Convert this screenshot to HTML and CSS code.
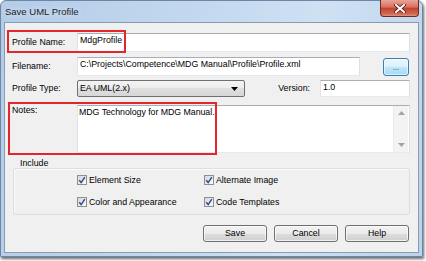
FILE: index.html
```html
<!DOCTYPE html>
<html>
<head>
<meta charset="utf-8">
<title>Save UML Profile</title>
<link rel="stylesheet" href="styles.css">
</head>
<body>
<div class="window">
  <div class="titlebar">
    <span class="title">Save UML Profile</span>
    <div class="close">
      <svg width="12" height="9" viewBox="0 0 12 9"><path d="M2 1 L10 8 M10 1 L2 8" stroke="#5a1f18" stroke-width="3.6" stroke-linecap="square" fill="none"/><path d="M2 1 L10 8 M10 1 L2 8" stroke="#ffffff" stroke-width="2" stroke-linecap="square" fill="none"/></svg>
    </div>
  </div>
  <div class="client">
    <div class="row r1">
      <span class="lbl">Profile Name:</span>
      <div class="input grow">MdgProfile</div>
    </div>
    <div class="row r2">
      <span class="lbl">Filename:</span>
      <div class="input file">C:\Projects\Competence\MDG Manual\Profile\Profile.xml</div>
      <div class="browse">...</div>
    </div>
    <div class="row r3">
      <span class="lbl">Profile Type:</span>
      <div class="combo"><span class="combo-text">EA UML(2.x)</span><svg class="combo-arrow" width="7" height="4" viewBox="0 0 7 4"><path d="M0 0 H7 L3.5 4 Z" fill="#000"/></svg></div>
      <span class="vlbl">Version:</span>
      <div class="input ver">1.0</div>
    </div>
    <div class="row r4">
      <span class="lbl notes-lbl">Notes:</span>
      <div class="textarea">
        <div class="ta-text">MDG Technology for MDG Manual.</div>
        <div class="scroll">
          <div class="sb-btn"><svg width="7" height="4" viewBox="0 0 7 4"><path d="M0 4 H7 L3.5 0 Z" fill="#a3a3a3"/></svg></div>
          <div class="sb-btn"><svg width="7" height="4" viewBox="0 0 7 4"><path d="M0 0 H7 L3.5 4 Z" fill="#a3a3a3"/></svg></div>
        </div>
      </div>
    </div>
    <div class="include-label">Include</div>
    <div class="group">
      <div class="cb"><span class="box"><svg width="8" height="8" viewBox="0 0 8 8"><path d="M1.2 4.2 L3.2 6.6 L6.8 1.2" stroke="#2a4d9c" stroke-width="1.5" fill="none"/></svg></span><span>Element Size</span></div>
      <div class="cb"><span class="box"><svg width="8" height="8" viewBox="0 0 8 8"><path d="M1.2 4.2 L3.2 6.6 L6.8 1.2" stroke="#2a4d9c" stroke-width="1.5" fill="none"/></svg></span><span>Alternate Image</span></div>
      <div class="cb"><span class="box"><svg width="8" height="8" viewBox="0 0 8 8"><path d="M1.2 4.2 L3.2 6.6 L6.8 1.2" stroke="#2a4d9c" stroke-width="1.5" fill="none"/></svg></span><span>Color and Appearance</span></div>
      <div class="cb"><span class="box"><svg width="8" height="8" viewBox="0 0 8 8"><path d="M1.2 4.2 L3.2 6.6 L6.8 1.2" stroke="#2a4d9c" stroke-width="1.5" fill="none"/></svg></span><span>Code Templates</span></div>
    </div>
    <div class="buttons">
      <div class="btn">Save</div>
      <div class="btn">Cancel</div>
      <div class="btn">Help</div>
    </div>
    <div class="mark m1"></div>
    <div class="mark m2"></div>
  </div>
</div>
</body>
</html>
```

FILE: styles.css
```css
html, body {
  margin: 0;
  padding: 0;
}
body {
  width: 426px;
  height: 261px;
  overflow: hidden;
  background: #ffffff;
  font-family: "Liberation Sans", Arial, sans-serif;
  font-size: 8.8px;
  color: #000;
}
.window {
  box-sizing: border-box;
  width: 423px;
  height: 257px;
  border: 1px solid #6d86a6;
  border-radius: 6px 6px 0 0;
  background: linear-gradient(100deg, #b3cce8 0%, #c4d9ef 45%, #cfe1f3 70%, #bcd3ed 100%);
  box-shadow: 1px 2px 3px rgba(0, 0, 0, 0.6);
  display: flex;
  flex-direction: column;
}
.titlebar {
  height: 21px;
  flex: none;
  display: flex;
  align-items: flex-start;
}
.title {
  font-size: 9.5px;
  line-height: 12px;
  padding: 5px 0 0 4px;
  color: #1b1b1b;
  text-shadow: 0 0 6px rgba(255, 255, 255, 0.95);
}
.close {
  margin-left: auto;
  margin-right: 3px;
  margin-top: -1px;
  box-sizing: border-box;
  width: 39px;
  height: 17px;
  border: 1px solid #6a2b22;
  border-top: none;
  border-radius: 0 0 4px 4px;
  background: linear-gradient(#e8a596 0%, #d8705e 45%, #c2402c 50%, #d2654f 85%, #e0907e 100%);
  display: flex;
  align-items: center;
  justify-content: center;
}
.client {
  position: relative;
  box-sizing: border-box;
  margin: 0 3px;
  width: 415px;
  height: 231px;
  border: 1px solid #8a9ab0;
  background: #f0f0f0;
  padding: 0 8px 0 7px;
}
.row {
  display: flex;
  align-items: center;
}
.lbl {
  width: 65px;
  flex: none;
  line-height: 13px;
}
.input {
  box-sizing: border-box;
  height: 19px;
  border: 1px solid #abadb3;
  border-color: #abadb3 #dbdfe6 #e3e9ef #e2e3ea;
  background: #fff;
  padding: 0 2px;
  line-height: 13px;
  white-space: nowrap;
  overflow: hidden;
}
.r1 {
  margin-top: 10px;
  height: 19px;
}
.grow {
  flex: 1;
}
.r2 {
  margin-top: 5px;
  height: 19px;
}
.file {
  width: 283px;
}
.browse {
  margin-left: auto;
  margin-right: 1px;
  box-sizing: border-box;
  width: 26px;
  height: 18px;
  border: 1px solid #3c7fb1;
  border-radius: 3px;
  background: linear-gradient(#eaf6fd 0%, #d9f0fc 50%, #bee6fd 50%, #a7d9f5 100%);
  box-shadow: inset 0 0 0 1px rgba(255, 255, 255, 0.6);
  display: flex;
  justify-content: center;
  align-items: center;
  font-size: 8px;
  line-height: 10px;
  color: #333;
  padding-top: 2px;
}
.r3 {
  margin-top: 4px;
  height: 17px;
}
.combo {
  box-sizing: border-box;
  width: 168px;
  height: 17px;
  border: 1px solid #707070;
  border-radius: 2px;
  background: linear-gradient(#f4f4f4 0%, #ececec 50%, #e0e0e0 50%, #d6d6d6 100%);
  display: flex;
  align-items: center;
  padding: 0 6px 0 2px;
  line-height: 13px;
}
.combo-arrow {
  margin-left: auto;
}
.vlbl {
  margin-left: auto;
  margin-right: 10px;
  line-height: 13px;
}
.ver {
  width: 90px;
  height: 17px;
}
.r4 {
  margin-top: 8px;
  height: 48px;
  align-items: flex-start;
}
.notes-lbl {
  margin-top: -1px;
}
.textarea {
  flex: 1;
  box-sizing: border-box;
  height: 48px;
  border: 1px solid #abadb3;
  border-color: #abadb3 #dbdfe6 #e3e9ef #e2e3ea;
  background: #fff;
  display: flex;
}
.ta-text {
  flex: 1;
  padding: 0 2px 0 1px;
  line-height: 13px;
  letter-spacing: -0.04px;
}
.scroll {
  width: 14px;
  margin-right: 1px;
  background: #f3f3f3;
  border-left: 1px solid #ebebeb;
  display: flex;
  flex-direction: column;
  justify-content: space-between;
}
.sb-btn {
  height: 14px;
  display: flex;
  align-items: center;
  justify-content: center;
}
.include-label {
  margin: 5px 0 0 8px;
  line-height: 10px;
  height: 10px;
}
.group {
  box-sizing: border-box;
  margin-left: 1px;
  height: 47px;
  border: 1px solid #d5dfe5;
  border-radius: 3px;
  box-shadow: inset 1px 1px 0 #fbfbfb;
  display: grid;
  grid-template-columns: 127px auto;
  grid-auto-rows: 10px;
  row-gap: 12px;
  padding: 6px 0 0 63px;
  align-content: start;
}
.cb {
  display: flex;
  align-items: center;
  gap: 2px;
  height: 10px;
  line-height: 10px;
  white-space: nowrap;
}
.box {
  box-sizing: border-box;
  width: 10px;
  height: 10px;
  border: 1px solid #8f8f8f;
  background: linear-gradient(135deg, #d6d6d6, #fbfbfb);
  display: flex;
  align-items: center;
  justify-content: center;
}
.buttons {
  margin-top: 10px;
  display: flex;
  justify-content: flex-end;
  gap: 7px;
  padding-right: 1px;
}
.btn {
  box-sizing: border-box;
  width: 64px;
  height: 17px;
  border: 1px solid #707070;
  border-radius: 3px;
  background: linear-gradient(#f2f2f2 0%, #ebebeb 50%, #dddddd 50%, #cfcfcf 100%);
  box-shadow: inset 0 0 0 1px rgba(255, 255, 255, 0.7);
  display: flex;
  align-items: center;
  justify-content: center;
  line-height: 13px;
}
.mark {
  position: absolute;
  box-sizing: border-box;
  border: 2px solid #e4252b;
  pointer-events: none;
}
.m1 {
  left: 2px;
  top: 7px;
  width: 119px;
  height: 23px;
}
.m2 {
  left: 3px;
  top: 79px;
  width: 209px;
  height: 53px;
}
```
